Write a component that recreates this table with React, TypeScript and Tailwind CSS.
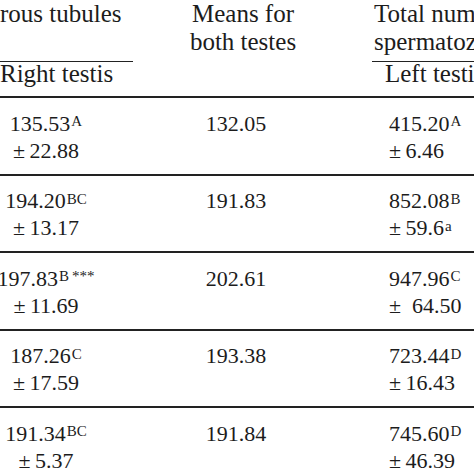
import React from "react";

interface Row {
  right: string;
  rightSup: string;
  rightPm: string;
  mean: string;
  left: string;
  leftSup: string;
  leftPm: string;
  leftPmSup?: string;
}

// Values as printed in the table (diameter right testis, mean, total spermatozoa left testis)
const ROWS: Row[] = [
  { right: "135.53", rightSup: "A", rightPm: "±\u200922.88", mean: "132.05", left: "415.20", leftSup: "A", leftPm: "±\u20096.46" },
  { right: "194.20", rightSup: "BC", rightPm: "±\u200913.17", mean: "191.83", left: "852.08", leftSup: "B", leftPm: "±\u200959.6", leftPmSup: "a" },
  { right: "197.83", rightSup: "B\u2009***", rightPm: "±\u200911.69", mean: "202.61", left: "947.96", leftSup: "C", leftPm: "±\u00a0\u00a064.50" },
  { right: "187.26", rightSup: "C", rightPm: "±\u200917.59", mean: "193.38", left: "723.44", leftSup: "D", leftPm: "±\u200916.43" },
  { right: "191.34", rightSup: "BC", rightPm: "±\u20095.37", mean: "191.84", left: "745.60", leftSup: "D", leftPm: "±\u200946.39" },
];

function Sup({ children }: { children: React.ReactNode }) {
  return <sup className="text-[15px] top-[-4.5px] ml-[1px]">{children}</sup>;
}

export default function App() {
  return (
    <div className="w-[474px] h-[474px] overflow-hidden bg-white text-[#1c1c1c] font-['Liberation_Serif',serif]">
      {/* header, first line */}
      <div className="flex items-start h-[61.5px] text-[25px] whitespace-nowrap">
        <div className="w-[133px] shrink-0 h-[61.5px] border-b-[1.5px] border-[#222] leading-[27px]">
          rous tubules
        </div>
        <div className="w-[220px] shrink-0 text-center">
          <div className="leading-[27px]">Means for</div>
          <div className="leading-[29px]">both testes</div>
        </div>
        <div className="w-[19px] shrink-0" />
        <div className="flex-1 h-[61.5px] border-b-[1.5px] border-[#222] pl-[2px]">
          <div className="leading-[27px]">Total number of</div>
          <div className="leading-[29px]">spermatozoa</div>
        </div>
      </div>

      {/* header, second line */}
      <div className="flex h-[34.5px] text-[25px] leading-[24px] whitespace-nowrap">
        <div className="w-[385px] shrink-0">Right testis</div>
        <div>Left testis</div>
      </div>

      {ROWS.map((r) => (
        <div
          key={r.right}
          className="flex border-t-2 border-[#222] pt-[11.5px] pb-[10px] text-[22px] leading-[27px] whitespace-nowrap"
        >
          <div className="w-[92px] shrink-0 flex flex-col items-center">
            <div>
              {r.right}
              <Sup>{r.rightSup}</Sup>
            </div>
            <div>{r.rightPm}</div>
          </div>
          <div className="w-[288px] shrink-0 text-center">{r.mean}</div>
          <div className="pl-[9px]">
            <div>
              {r.left}
              <Sup>{r.leftSup}</Sup>
            </div>
            <div>
              {r.leftPm}
              {r.leftPmSup && <Sup>{r.leftPmSup}</Sup>}
            </div>
          </div>
        </div>
      ))}
    </div>
  );
}
